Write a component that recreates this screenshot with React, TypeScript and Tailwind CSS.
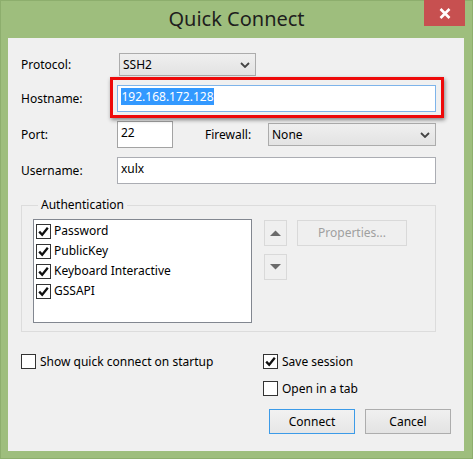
import React from "react";

function Chevron() {
  return (
    <svg width="10" height="6" viewBox="0 0 10 6" className="shrink-0">
      <path d="M1 1 L5 5 L9 1" fill="none" stroke="#444" strokeWidth="1.8" />
    </svg>
  );
}

function Check({ checked }: { checked: boolean }) {
  return (
    <span className="w-[15px] h-[15px] border border-[#333] bg-white flex items-center justify-center shrink-0">
      {checked && (
        <svg width="13" height="13" viewBox="0 0 13 13">
          <path d="M2.2 6.6 L5.2 9.8 L10.8 2.8" fill="none" stroke="#111" strokeWidth="2.3" />
        </svg>
      )}
    </span>
  );
}

function Combo({ value, w }: { value: string; w: string }) {
  return (
    <div
      className={`${w} h-[23px] border border-[#acacac] bg-gradient-to-b from-[#efefef] to-[#e3e3e3] flex items-center justify-between pl-[3px] pr-[5px]`}
    >
      <span>{value}</span>
      <Chevron />
    </div>
  );
}

export default function App() {
  return (
    <div className="w-[473px] h-[459px] bg-[#9ebe7d] shadow-[inset_0_0_0_1px_#8dae6d] font-['Noto_Sans',sans-serif] text-[12px] text-black leading-[16px] flex flex-col">
      {/* Title bar */}
      <div className="relative h-[38px] flex items-center justify-center">
        <span className="text-[20px] leading-[26px] text-[#1e1e1e]">Quick Connect</span>
        <div className="absolute top-0 right-[8px] w-[41px] h-[26px] bg-[#c75050] flex items-center justify-center">
          <svg width="12" height="11" viewBox="0 0 12 11">
            <path d="M1.5 1 L10.5 10 M10.5 1 L1.5 10" stroke="#fff" strokeWidth="2.6" />
          </svg>
        </div>
      </div>

      {/* Client area */}
      <div className="ml-[8px] w-[456px] h-[413px] bg-[#f0f0f0] pl-[13px] pt-[15px] flex flex-col">
        {/* Protocol */}
        <div className="flex items-center h-[23px]">
          <span className="w-[98px]">Protocol:</span>
          <Combo value="SSH2" w="w-[137px]" />
        </div>

        {/* Hostname */}
        <div className="flex items-center h-[27px] mt-[9px]">
          <span className="w-[96px]">Hostname:</span>
          <div className="relative w-[319px] h-[27px] border border-[#7eb4ea] bg-white pl-[3px] pt-[2px]">
            <span className="bg-[#3399ff] text-white leading-[17px] inline-block px-[0.5px]">192.168.172.128</span>
            <span className="absolute -left-[8px] -top-[9px] -right-[9px] -bottom-[7px] border-[3px] border-[#ee0a0a] shadow-[1px_2px_4px_rgba(0,0,0,0.45)] pointer-events-none" />
          </div>
        </div>

        {/* Port / Firewall */}
        <div className="flex items-center h-[27px] mt-[9px]">
          <span className="w-[96px]">Port:</span>
          <div className="w-[56px] h-[27px] border border-[#a3a3a3] bg-white pl-[3px] pt-[2px] leading-[17px]">22</div>
          <span className="ml-[32px] w-[63px]">Firewall:</span>
          <Combo value="None" w="w-[168px]" />
        </div>

        {/* Username */}
        <div className="flex items-center h-[27px] mt-[9px]">
          <span className="w-[96px]">Username:</span>
          <div className="w-[319px] h-[27px] border border-[#abadb3] bg-white pl-[3px] pt-[2px] leading-[17px]">xulx</div>
        </div>

        {/* Authentication */}
        <fieldset className="mt-[13px] w-[415px] h-[135px] border border-[#dcdcdc] pl-[11px] pt-[6px] flex">
          <legend className="ml-[5px] px-[3px] leading-[16px]">Authentication</legend>
          <div className="flex">
            <div className="w-[219px] h-[104px] border border-[#828790] bg-white pt-[4px] pl-[2px] flex flex-col">
              {["Password", "PublicKey", "Keyboard Interactive", "GSSAPI"].map((t) => (
                <div key={t} className="h-[20px] flex items-start">
                  <Check checked />
                  <span className="ml-[3px] leading-[15px] -mt-[1px]">{t}</span>
                </div>
              ))}
            </div>
            <div className="ml-[12px] mt-[1px] flex flex-col gap-[8px]">
              <div className="w-[23px] h-[26px] border border-[#d9d9d9] bg-[#efefef] flex items-center justify-center">
                <svg width="11" height="6" viewBox="0 0 11 6">
                  <polygon points="0,6 5.5,0.5 11,6" fill="#6b6b6b" />
                </svg>
              </div>
              <div className="w-[23px] h-[26px] border border-[#d9d9d9] bg-[#efefef] flex items-center justify-center">
                <svg width="11" height="6" viewBox="0 0 11 6">
                  <polygon points="0,0 11,0 5.5,5.5" fill="#6b6b6b" />
                </svg>
              </div>
            </div>
            <div className="ml-[10px] mt-[1px] w-[110px] h-[26px] border border-[#d9d9d9] bg-[#efefef] flex items-center justify-center text-[#a0a0a0]">
              Properties...
            </div>
          </div>
        </fieldset>

        {/* Options */}
        <div className="mt-[22px] flex">
          <div className="w-[242px] flex items-center h-[15px]">
            <Check checked={false} />
            <span className="ml-[4px]">Show quick connect on startup</span>
          </div>
          <div className="flex flex-col gap-[12px]">
            <div className="flex items-center h-[15px]">
              <Check checked />
              <span className="ml-[4px]">Save session</span>
            </div>
            <div className="flex items-center h-[15px]">
              <Check checked={false} />
              <span className="ml-[4px]">Open in a tab</span>
            </div>
          </div>
        </div>

        {/* Buttons */}
        <div className="mt-[13px] flex justify-end gap-[10px] pr-[13px]">
          <div className="w-[86px] h-[25px] border border-[#3c9be8] bg-gradient-to-b from-[#f2f2f2] to-[#e6e6e6] flex items-center justify-center">
            Connect
          </div>
          <div className="w-[86px] h-[25px] border border-[#adadad] bg-gradient-to-b from-[#f0f0f0] to-[#e3e3e3] flex items-center justify-center">
            Cancel
          </div>
        </div>
      </div>
    </div>
  );
}
